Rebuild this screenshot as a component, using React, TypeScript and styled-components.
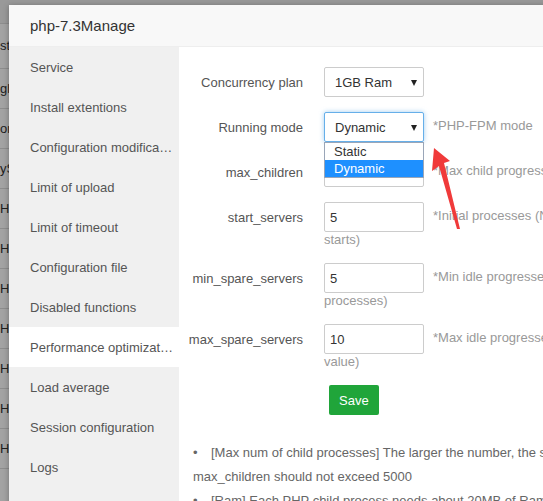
import styled, { createGlobalStyle } from 'styled-components'

const GlobalStyle = createGlobalStyle`
	html, body {
		margin: 0;
		padding: 0;
	}
	body {
		font-family: 'Liberation Sans', Arial, sans-serif;
		overflow: hidden;
		background: #fff;
	}
`

const Page = styled.div`
	position: relative;
	width: 543px;
	height: 501px;
	overflow: hidden;
	background: #fff;
`
const BackTable = styled.div`
	display: flex;
	flex-direction: column;
`
const BackHead = styled.div`
	height: 23px;
	background: #f0f0f0;
	border-bottom: 1px solid #ddd;
`
const BackRow = styled.div<{ $tall?: boolean }>`
	height: ${(p) => (p.$tall ? 44 : 39)}px;
	line-height: ${(p) => (p.$tall ? 44 : 39)}px;
	border-bottom: 1px solid #ddd;
	font-size: 13px;
	color: #333;
	white-space: nowrap;
`
const Mask = styled.div`
	position: absolute;
	inset: 0;
	background: rgba(0, 0, 0, 0.36);
`
const Dialog = styled.div`
	position: absolute;
	top: 5px;
	left: 9px;
	width: 756px;
	height: 540px;
	background: #fff;
	box-shadow: 0 1px 6px rgba(0, 0, 0, 0.3);
	display: flex;
	flex-direction: column;
`
const TitleBar = styled.div`
	height: 41px;
	line-height: 42px;
	padding-left: 21px;
	background: #f8f8f8;
	border-bottom: 1px solid #eee;
	font-size: 15px;
	color: #333;
`
const Body = styled.div`
	display: flex;
	flex: 1;
`
const Sidebar = styled.ul`
	width: 170px;
	margin: 0;
	padding: 0;
	list-style: none;
	background: #f0f0f0;
	flex-shrink: 0;
`
const NavItem = styled.li<{ $active?: boolean }>`
	height: 40px;
	line-height: 42px;
	padding: 0 5px 0 21px;
	font-size: 13px;
	color: #555;
	white-space: nowrap;
	overflow: hidden;
	text-overflow: ellipsis;
	background: ${(p) => (p.$active ? '#fff' : 'transparent')};
`
const Content = styled.div`
	flex: 1;
	padding-top: 20px;
`
const Row = styled.div`
	display: flex;
	align-items: flex-start;
	margin-bottom: 15px;
`
const Label = styled.div`
	width: 124px;
	margin-right: 21px;
	flex-shrink: 0;
	height: 30px;
	line-height: 31px;
	text-align: right;
	font-size: 13px;
	color: #555;
`
const Field = styled.div`
	width: 462px;
	flex-shrink: 0;
	font-size: 13px;
	line-height: 16px;
`
const SelectWrap = styled.div`
	position: relative;
	display: inline-block;
	vertical-align: middle;
`
const SelectBox = styled.div<{ $focused?: boolean }>`
	position: relative;
	box-sizing: border-box;
	width: 100px;
	height: 30px;
	line-height: 29px;
	padding-left: 10px;
	border: 1px solid ${(p) => (p.$focused ? '#66afe9' : '#ccc')};
	border-radius: 2px;
	box-shadow: ${(p) => (p.$focused ? '0 0 5px rgba(102, 175, 233, 0.6)' : 'none')};
	color: #333;
	font-size: 13px;
	background: #fff;
`
const Caret = styled.span`
	position: absolute;
	right: 6px;
	top: 12px;
	width: 0;
	height: 0;
	border-left: 3px solid transparent;
	border-right: 3px solid transparent;
	border-top: 6px solid #222;
`
const OptionList = styled.ul`
	position: absolute;
	top: 30px;
	left: 0;
	z-index: 2;
	box-sizing: border-box;
	width: 100px;
	margin: 0;
	padding: 0;
	list-style: none;
	background: #fff;
	border: 1px solid #9aa6b8;
`
const Option = styled.li<{ $selected?: boolean }>`
	height: 17px;
	line-height: 17px;
	padding-left: 9px;
	font-size: 13px;
	color: ${(p) => (p.$selected ? '#fff' : '#333')};
	background: ${(p) => (p.$selected ? '#1e90ff' : '#fff')};
`
const TextInput = styled.input`
	box-sizing: border-box;
	width: 100px;
	height: 30px;
	padding: 0 5px;
	border: 1px solid #ccc;
	border-radius: 2px;
	font-family: inherit;
	font-size: 13px;
	color: #333;
	vertical-align: middle;
	outline: none;
`
const Hint = styled.span`
	margin-left: 9px;
	color: #999;
`
const SaveRow = styled.div`
	padding-left: 150px;
`
const SaveButton = styled.button`
	height: 30px;
	padding: 0 10px;
	border: none;
	border-radius: 2px;
	background: #20a53a;
	color: #fff;
	font-family: inherit;
	font-size: 13px;
`
const Notes = styled.ul`
	margin: 26px 14px 0;
	padding: 0;
	list-style: none;
`
const Note = styled.li`
	line-height: 24px;
	font-size: 13px;
	color: #666;
	&::before {
		content: '•';
		display: inline-block;
		width: 18px;
	}
`

const backRows = ['strace', 'ghostscript', 'ordinary', 'ySQL 5.7', 'HP-5.6', 'HP-7.0', 'HP-7.1', 'HP-7.2', 'HP-7.3', 'HP-7.4', 'HP-8.0']

const navItems = [
	'Service',
	'Install extentions',
	'Configuration modification',
	'Limit of upload',
	'Limit of timeout',
	'Configuration file',
	'Disabled functions',
	'Performance optimization',
	'Load average',
	'Session configuration',
	'Logs',
]

const fields = [
	{ name: 'max_children', value: '30', hint: '*Max child progresses' },
	{ name: 'start_servers', value: '5', hint: '*Initial processes (Number of processes when the service starts)' },
	{ name: 'min_spare_servers', value: '5', hint: '*Min idle progresses (The minimum number of idle processes)' },
	{ name: 'max_spare_servers', value: '10', hint: '*Max idle progresses (Max number of idle processes, default value)' },
]

export default function App() {
	return (
		<Page>
			<GlobalStyle />
			<BackTable>
				<BackHead />
				{backRows.map((name, index) => (
					<BackRow key={name} $tall={index === 0}>
						{name}
					</BackRow>
				))}
			</BackTable>
			<Mask />
			<Dialog>
				<TitleBar>php-7.3Manage</TitleBar>
				<Body>
					<Sidebar>
						{navItems.map((item) => (
							<NavItem key={item} $active={item === 'Performance optimization'}>
								{item}
							</NavItem>
						))}
					</Sidebar>
					<Content>
						<Row>
							<Label>Concurrency plan</Label>
							<Field>
								<SelectWrap>
									<SelectBox>
										1GB Ram
										<Caret />
									</SelectBox>
								</SelectWrap>
							</Field>
						</Row>
						<Row>
							<Label>Running mode</Label>
							<Field>
								<SelectWrap>
									<SelectBox $focused>
										Dynamic
										<Caret />
									</SelectBox>
									<OptionList>
										<Option>Static</Option>
										<Option $selected>Dynamic</Option>
									</OptionList>
								</SelectWrap>
								<Hint>*PHP-FPM mode</Hint>
							</Field>
						</Row>
						{fields.map((f) => (
							<Row key={f.name}>
								<Label>{f.name}</Label>
								<Field>
									<TextInput defaultValue={f.value} />
									<Hint>{f.hint}</Hint>
								</Field>
							</Row>
						))}
						<SaveRow>
							<SaveButton>Save</SaveButton>
						</SaveRow>
						<Notes>
							<Note>
								[Max num of child processes] The larger the number, the stronger the concurrency, but max_children should not exceed 5000
							</Note>
							<Note>[Ram] Each PHP child process needs about 20MB of Ram, too many processes may exhaust memory</Note>
						</Notes>
					</Content>
				</Body>
			</Dialog>
			<svg
				width="543"
				height="501"
				viewBox="0 0 543 501"
				style={{ position: 'absolute', left: 0, top: 0, pointerEvents: 'none' }}
			>
				<polygon points="434,148 450,161 444,163 460,229 457,229 439,166 432,171" fill="#f03a3a" />
			</svg>
		</Page>
	)
}
